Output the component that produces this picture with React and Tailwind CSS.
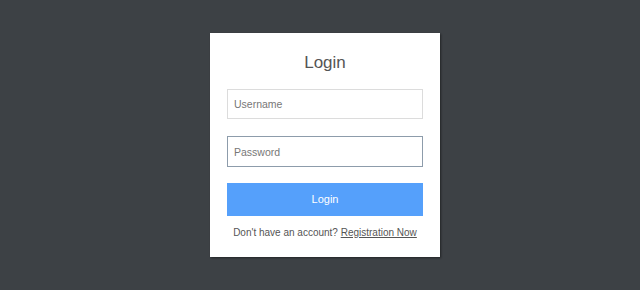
export default function App() {
  return (
    <div className="min-h-screen w-full bg-[#3d4145] flex justify-center pt-[33px] pl-[10px] font-['Liberation_Sans',Arial,sans-serif]">
      <div className="w-[230px] h-[224px] bg-white shadow-[1px_1px_2px_rgba(0,0,0,0.45)] px-[17px] pt-[19px] flex flex-col">
        <h1 className="text-center text-[17px] leading-[22px] text-[#555]">Login</h1>
        <input
          type="text"
          placeholder="Username"
          className="mt-[15px] h-[30px] w-full border border-[#dcdcdc] px-[6px] text-[10.5px] text-[#555] placeholder:text-[#777] outline-none"
        />
        <input
          type="password"
          placeholder="Password"
          className="mt-[17px] h-[31px] w-full border border-[#8d9cab] px-[6px] text-[10.5px] text-[#555] placeholder:text-[#777] outline-none"
        />
        <button
          type="button"
          className="mt-[16px] h-[33px] w-full bg-[#55a0fb] text-white text-[11px]"
        >
          Login
        </button>
        <p className="mt-[9px] text-center text-[10px] whitespace-nowrap text-[#555]">
          Don't have an account? <a className="underline">Registration Now</a>
        </p>
      </div>
    </div>
  )
}
